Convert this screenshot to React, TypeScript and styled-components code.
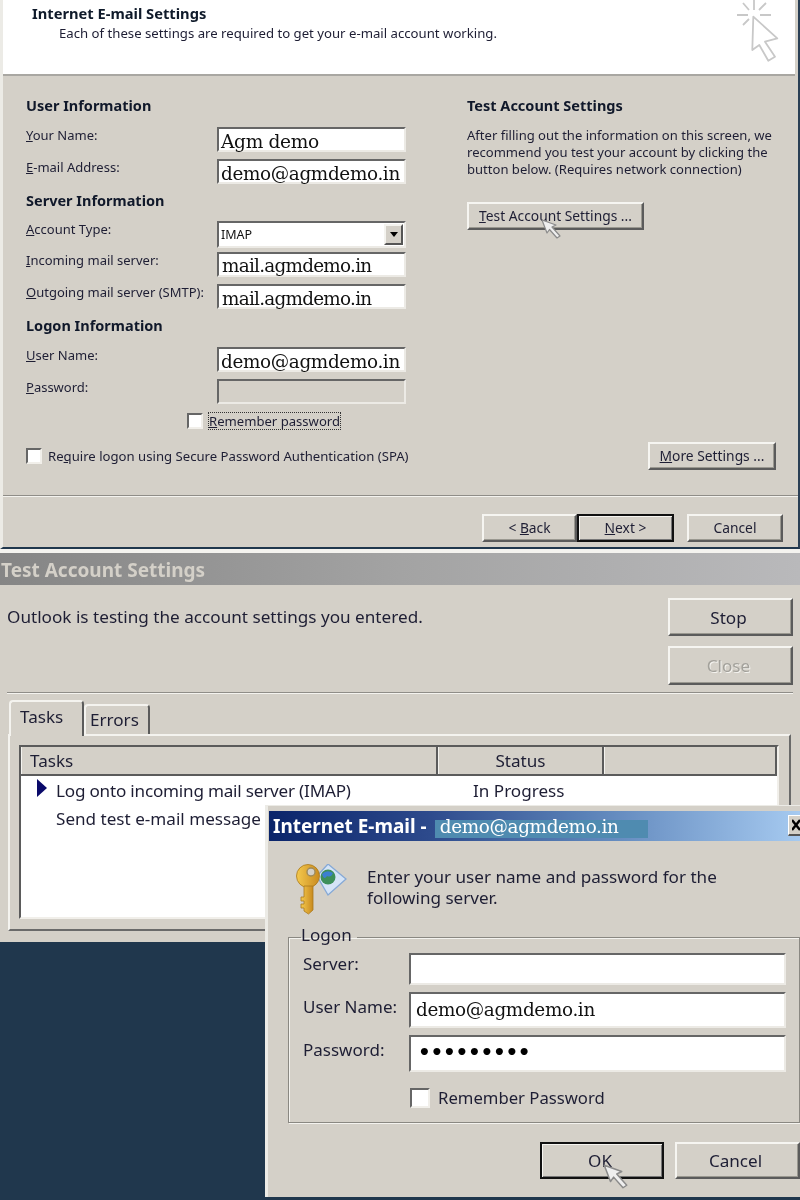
import React from "react";
import styled, { createGlobalStyle } from "styled-components";

const Global = createGlobalStyle`
  html, body { margin: 0; padding: 0; background: #20374d; }
`;

const ui = `"Noto Sans", "Liberation Sans", sans-serif`;
const serif = `"DejaVu Serif", "Liberation Serif", serif`;
const ink = "#1e1e34";
const face = "#d4d0c8";

const Page = styled.div`
  position: relative;
  width: 800px;
  height: 1200px;
  overflow: hidden;
  background: #20374d;
  font-family: ${ui};
  color: ${ink};
  filter: blur(0.35px);
`;

/* ---------- wizard window ---------- */
const Wizard = styled.section`
  box-sizing: border-box;
  height: 549px;
  background: ${face};
  border-left: 3px solid #ecebe6;
  border-right: 2px solid #2a3f55;
  border-bottom: 2px solid #20374d;
  display: flex;
  flex-direction: column;
`;
const Header = styled.header`
  position: relative;
  box-sizing: border-box;
  height: 76px;
  flex: none;
  margin-right: 3px;
  background: #fff;
  border-bottom: 2px solid #a9a7a2;
  padding: 4px 0 0 29px;
`;
const HeaderTitle = styled.div`
  font-size: 14.7px;
  line-height: 18px;
  font-weight: 700;
  color: #0f1a2a;
`;
const HeaderText = styled.div`
  font-size: 13.18px;
  line-height: 20px;
  margin: 1px 0 0 27px;
`;
const Spark = styled.svg`
  position: absolute;
  left: 731px;
  top: 0;
`;
const WizardBody = styled.div`
  flex: 1;
  padding: 20px 22px 0 23px;
`;
const Columns = styled.div`
  display: flex;
`;
const LeftColumn = styled.div`
  width: 380px;
  flex: none;
`;
const RightColumn = styled.div`
  margin-left: 60px;
  width: 310px;
  padding-left: 1px;
`;
const Heading = styled.div<{ $after?: number }>`
  font-size: 14.5px;
  line-height: 18px;
  font-weight: 700;
  color: #10182a;
  margin-bottom: ${(p) => (p.$after ?? 11) + 2}px;
`;
const Row = styled.div<{ $after?: number }>`
  display: flex;
  margin-bottom: ${(p) => p.$after ?? 7}px;
`;
const Label = styled.div`
  width: 191px;
  flex: none;
  font-size: 13px;
  line-height: 17px;
`;
const Field = styled.div<{
  $h?: number;
  $disabled?: boolean;
  $size?: number;
  $pad?: number;
  $track?: number;
  $nudgeTop?: number;
  $nudgeBottom?: number;
}>`
  box-sizing: border-box;
  flex: 1;
  height: ${(p) => p.$h ?? 25}px;
  display: flex;
  align-items: center;
  justify-content: space-between;
  padding: ${(p) => p.$nudgeTop ?? 3}px 0 ${(p) => p.$nudgeBottom ?? 0}px ${(p) => p.$pad ?? 2}px;
  background: ${(p) => (p.$disabled ? face : "#fff")};
  border-top: 2px solid #666;
  border-left: 2px solid #666;
  border-bottom: 2px solid #eceae5;
  border-right: 2px solid #eceae5;
  font-family: ${serif};
  font-size: ${(p) => p.$size ?? 18.4}px;
  letter-spacing: ${(p) => p.$track ?? -0.35}px;
  color: #111;
  white-space: nowrap;
`;
const SelectText = styled.span`
  font-family: ${ui};
  font-size: 12.5px;
  letter-spacing: 0;
`;
const DropButton = styled.span`
  box-sizing: border-box;
  width: 19px;
  height: 21px;
  margin-right: 1px;
  background: ${face};
  border: 2px solid;
  border-color: #f4f3ef #555 #555 #f4f3ef;
  display: flex;
  align-items: center;
  justify-content: center;
  &::after {
    content: "";
    border-left: 4px solid transparent;
    border-right: 4px solid transparent;
    border-top: 5px solid #000;
  }
`;
const CheckRow = styled.div<{ $indent?: number; $gap?: number }>`
  display: flex;
  align-items: center;
  gap: ${(p) => p.$gap ?? 6}px;
  padding-left: ${(p) => p.$indent ?? 0}px;
`;
const Check = styled.span<{ $size?: number }>`
  box-sizing: border-box;
  width: ${(p) => p.$size ?? 16}px;
  height: ${(p) => p.$size ?? 16}px;
  flex: none;
  background: #fff;
  border-top: 2px solid #666;
  border-left: 2px solid #666;
  border-bottom: 2px solid #f1efea;
  border-right: 2px solid #f1efea;
`;
const FocusLabel = styled.span`
  font-size: 13.1px;
  line-height: 16px;
  outline: 1px dotted #333;
  white-space: nowrap;
`;
const CheckLabel = styled.span<{ $size?: number }>`
  font-size: ${(p) => p.$size ?? 13.15}px;
  white-space: nowrap;
`;
const Paragraph = styled.p`
  margin: 0;
  font-size: 13.05px;
  line-height: 17px;
  white-space: nowrap;
`;
const Button = styled.button<{ $w: number; $h?: number; $size?: number; $default?: boolean; $disabled?: boolean }>`
  box-sizing: border-box;
  flex: none;
  width: ${(p) => p.$w}px;
  height: ${(p) => p.$h ?? 28}px;
  padding: 0 ${(p) => (p.$size ? 4 : 0)}px ${(p) => (p.$size ? 0 : 2)}px 0;
  background: ${face};
  border: 2px solid;
  border-color: ${(p) => (p.$default ? "#111" : "#f6f5f1 #5b5b5b #5b5b5b #f6f5f1")};
  box-shadow: ${(p) => (p.$default ? "inset 1px 1px 0 #f6f5f1, inset -1px -1px 0 #777" : "inset -1px -1px 0 #9a9890")};
  font-family: ${ui};
  font-size: ${(p) => p.$size ?? 13.8}px;
  color: ${(p) => (p.$disabled ? "#a3a19b" : ink)};
  text-shadow: ${(p) => (p.$disabled ? "1px 1px 0 #f4f3ef" : "none")};
  white-space: nowrap;
`;
const TopGap = styled.div`
  margin-top: 24px;
`;
const OptionsBar = styled.div`
  display: flex;
  align-items: center;
  justify-content: space-between;
  margin-top: 13px;
  height: 28px;
`;
const Rule = styled.div<{ $top?: number }>`
  height: 1px;
  margin-top: ${(p) => p.$top ?? 0}px;
  background: #8f8d88;
  border-bottom: 1px solid #f4f3ef;
`;
const NavBar = styled.div`
  flex: none;
  display: flex;
  justify-content: flex-end;
  padding: 17px 15px 5px 0;
`;
const NavGap = styled.span`
  width: 13px;
`;
const Pointer = styled.svg<{ $x: number; $y: number }>`
  position: absolute;
  left: ${(p) => p.$x}px;
  top: ${(p) => p.$y}px;
`;

/* ---------- test settings window ---------- */
const TestWindow = styled.section`
  height: 393px;
  box-sizing: border-box;
  border-top: 4px solid #f4f3ef;
  background: ${face};
`;
const GreyTitle = styled.div`
  height: 32px;
  padding-left: 1px;
  background: linear-gradient(90deg, #858585, #a3a3a3 50%, #b9b9bb);
  color: #d4d0c8;
  font-size: 19px;
  font-weight: 700;
  line-height: 34px;
`;
const TestBody = styled.div`
  padding: 13px 7px 0 7px;
`;
const TestTop = styled.div`
  display: flex;
  justify-content: space-between;
`;
const Message = styled.div`
  font-size: 17.15px;
  line-height: 24px;
  margin-top: 7px;
`;
const ButtonStack = styled.div`
  display: flex;
  flex-direction: column;
  gap: 10px;
`;
const TabStrip = styled.div`
  display: flex;
  align-items: flex-end;
  height: 34px;
  margin: 6px 0 0 2px;
  position: relative;
  z-index: 1;
`;
const Tab = styled.div<{ $active?: boolean }>`
  box-sizing: border-box;
  width: ${(p) => (p.$active ? 75 : 66)}px;
  height: ${(p) => (p.$active ? 36 : 30)}px;
  margin-bottom: ${(p) => (p.$active ? -2 : 0)}px;
  padding: ${(p) => (p.$active ? "3px 0 0 9px" : "2px 0 0 4px")};
  background: ${face};
  border-top: 2px solid #f4f3ef;
  border-left: 2px solid #f4f3ef;
  border-right: 2px solid #5b5b5b;
  border-radius: 4px 4px 0 0;
  font-size: 17.1px;
  line-height: 24px;
`;
const TabPanel = styled.div`
  box-sizing: border-box;
  height: 197px;
  margin: 0 2px 0 1px;
  padding: 9px 10px 10px 9px;
  background: ${face};
  border: 2px solid;
  border-color: #f4f3ef #6a6a6a #6a6a6a #f4f3ef;
`;
const ListBox = styled.div`
  box-sizing: border-box;
  height: 174px;
  background: #fff;
  border: 2px solid;
  border-color: #5b5b5b #f1efea #f1efea #5b5b5b;
`;
const ListHead = styled.div`
  display: flex;
  height: 27px;
  background: ${face};
  border-bottom: 2px solid #5b5b5b;
  font-size: 17.1px;
`;
const HeadCell = styled.div<{ $w?: number; $center?: boolean }>`
  box-sizing: border-box;
  ${(p) => (p.$w ? `width: ${p.$w}px; flex: none;` : "flex: 1;")}
  border-right: 2px solid #5b5b5b;
  border-left: 1px solid #f4f3ef;
  line-height: 28px;
  padding-left: ${(p) => (p.$center ? 0 : 8)}px;
  text-align: ${(p) => (p.$center ? "center" : "left")};
`;
const TaskRow = styled.div`
  display: flex;
  align-items: center;
  height: 28px;
  font-size: 17.1px;
`;
const Marker = styled.span`
  width: 35px;
  flex: none;
  padding-left: 16px;
  box-sizing: border-box;
  &::before {
    content: "";
    display: block;
    border-left: 10px solid #0a0a6a;
    border-top: 9px solid transparent;
    border-bottom: 9px solid transparent;
    width: 0;
    margin-top: -4px;
  }
`;
const MarkerSpace = styled.span`
  width: 35px;
  flex: none;
`;
const TaskName = styled.span<{ $squeeze?: boolean }>`
  width: 417px;
  flex: none;
  white-space: nowrap;
  letter-spacing: ${(p) => (p.$squeeze ? "-0.2px" : "0")};
`;

/* ---------- credentials dialog ---------- */
const Dialog = styled.section`
  position: absolute;
  left: 265px;
  top: 805px;
  box-sizing: border-box;
  width: 535px;
  height: 392px;
  padding: 6px 0 0 4px;
  background: ${face};
  border-top: 1px solid #ecebe6;
  border-left: 3px solid #ecebe6;
`;
const DialogTitle = styled.div`
  position: relative;
  display: flex;
  align-items: center;
  height: 30px;
  margin: -1px 0 0 -3px;
  padding-left: 4px;
  background: linear-gradient(90deg, #0a246a, #2d4a8c 30%, #5b82b8 60%, #a6caf0);
  color: #fff;
  font-size: 19px;
  font-weight: 700;
  white-space: nowrap;
`;
const MaskedName = styled.span`
  box-sizing: border-box;
  width: 213px;
  height: 18px;
  margin: 5px 0 0 8px;
  padding-left: 5px;
  background: #4f8bb0;
  font-family: ${serif};
  font-size: 18.4px;
  line-height: 14px;
  font-weight: 400;
  letter-spacing: -0.35px;
`;
const CloseBox = styled.span`
  position: absolute;
  right: 0;
  top: 4px;
  box-sizing: border-box;
  width: 12px;
  height: 21px;
  background: ${face};
  border-top: 1px solid #fff;
  border-left: 1px solid #fff;
  border-bottom: 2px solid #555;
  display: flex;
  align-items: center;
  justify-content: flex-end;
`;
const Intro = styled.div`
  display: flex;
  gap: 20px;
  height: 52px;
  margin: 23px 0 0 23px;
`;
const IntroText = styled.div`
  font-size: 17.1px;
  line-height: 21px;
  padding-top: 2px;
`;
const Group = styled.fieldset`
  box-sizing: border-box;
  height: 198px;
  margin: 9px 0 0 16px;
  padding: 4px 13px 0 14px;
  min-width: 0;
  border: 1px solid #8a8882;
  box-shadow: inset 1px 1px 0 #f4f3ef, 1px 1px 0 #f4f3ef;
`;
const GroupLegend = styled.legend`
  padding: 0 5px 4px 0;
  margin-left: -2px;
  font-size: 17.1px;
  line-height: 20px;
`;
const DialogRow = styled.div<{ $after?: number }>`
  display: flex;
  margin-bottom: ${(p) => p.$after ?? 7}px;
`;
const DialogLabel = styled.div<{ $top: number }>`
  width: 106px;
  flex: none;
  padding-top: ${(p) => p.$top}px;
  font-size: 17px;
  line-height: 20px;
`;
const Dots = styled.span`
  font-family: "DejaVu Sans", sans-serif;
  font-size: 20px;
  font-weight: 700;
  letter-spacing: -0.3px;
  color: #000;
`;
const DialogButtons = styled.div`
  display: flex;
  justify-content: flex-end;
  gap: 11px;
  margin-top: 19px;
`;

const Arrow = ({ x, y, s }: { x: number; y: number; s: number }) => (
  <Pointer $x={x} $y={y} width={s} height={s} viewBox="0 0 20 20">
    <path
      d="M1 1 L6 14 L8.5 10.5 L16 19 L19 17 L11 8 L15 6 Z"
      fill="#efefef"
      stroke="#8a8a8a"
      strokeWidth="1.2"
      strokeLinejoin="round"
    />
  </Pointer>
);

const KeyIcon = () => (
  <svg width="52" height="52" viewBox="0 0 52 52">
    <defs>
      <linearGradient id="gold" x1="0" y1="0" x2="1" y2="0">
        <stop offset="0" stopColor="#f4c94e" />
        <stop offset="1" stopColor="#c98a1e" />
      </linearGradient>
    </defs>
    <path d="M22 12 L33 0 L51 15 L33 31 Z" fill="#d5e4f7" stroke="#86a9d6" strokeWidth="1.3" />
    <circle cx="33" cy="13" r="7.5" fill="#3d8f5a" />
    <path d="M27 10 Q32 5 38 9 Q36 14 32 12 Q29 17 27 10 Z" fill="#3b7fd0" />
    <circle cx="13" cy="12" r="11.5" fill="url(#gold)" stroke="#a9781c" strokeWidth="0.8" />
    <circle cx="16" cy="8" r="4" fill="#d4d0c8" stroke="#9d8a5c" strokeWidth="1.4" />
    <path d="M9 22 H18 V46 L13.5 50 L9 47 V44 H6 V40 H9 V37 H6 V33 H9 Z" fill="url(#gold)" stroke="#a9781c" strokeWidth="0.8" />
  </svg>
);

export default function App() {
  return (
    <Page>
      <Global />
      <Wizard>
        <Header>
          <HeaderTitle>Internet E-mail Settings</HeaderTitle>
          <HeaderText>Each of these settings are required to get your e-mail account working.</HeaderText>
          <Spark width="48" height="64" viewBox="0 0 48 64" fill="none" stroke="#c8c8c8" strokeWidth="1.8">
            <path d="M20 0 V10 M3 15 H14 M26 15 H37 M9 3 L15 10 M32 3 L25 10 M9 25 L15 19" />
            <path d="M19.3 16.7 L43.3 38.3 L31 41.7 L41 56.7 L34.3 60.7 L25.3 45 L18.3 50 Z" strokeLinejoin="round" fill="#fff" />
          </Spark>
        </Header>
        <WizardBody>
          <Columns>
            <LeftColumn>
              <Heading>User Information</Heading>
              <Row>
                <Label><u>Y</u>our Name:</Label>
                <Field $size={18.6}>Agm demo</Field>
              </Row>
              <Row>
                <Label><u>E</u>-mail Address:</Label>
                <Field>demo@agmdemo.in</Field>
              </Row>
              <Heading $after={10}>Server Information</Heading>
              <Row $after={4}>
                <Label><u>A</u>ccount Type:</Label>
                <Field $h={27} $nudgeTop={0}>
                  <SelectText>IMAP</SelectText>
                  <DropButton />
                </Field>
              </Row>
              <Row>
                <Label><u>I</u>ncoming mail server:</Label>
                <Field $pad={3} $track={-0.75} $nudgeTop={1}>mail.agmdemo.in</Field>
              </Row>
              <Row>
                <Label><u>O</u>utgoing mail server (SMTP):</Label>
                <Field $pad={3} $track={-0.75}>mail.agmdemo.in</Field>
              </Row>
              <Heading>Logon Information</Heading>
              <Row>
                <Label><u>U</u>ser Name:</Label>
                <Field>demo@agmdemo.in</Field>
              </Row>
              <Row $after={9}>
                <Label><u>P</u>assword:</Label>
                <Field $disabled />
              </Row>
              <CheckRow $indent={161}>
                <Check />
                <FocusLabel><u>R</u>emember password</FocusLabel>
              </CheckRow>
            </LeftColumn>
            <RightColumn>
              <Heading>Test Account Settings</Heading>
              <Paragraph>
                After filling out the information on this screen, we
                <br />
                recommend you test your account by clicking the
                <br />
                button below. (Requires network connection)
              </Paragraph>
              <TopGap>
                <Button $w={177}><u>T</u>est Account Settings ...</Button>
              </TopGap>
            </RightColumn>
          </Columns>
          <OptionsBar>
            <CheckRow>
              <Check />
              <CheckLabel>Re<u>q</u>uire logon using Secure Password Authentication (SPA)</CheckLabel>
            </CheckRow>
            <Button $w={128}><u>M</u>ore Settings ...</Button>
          </OptionsBar>
        </WizardBody>
        <Rule />
        <NavBar>
          <Button $w={95}>&lt; <u>B</u>ack</Button>
          <Button $w={97} $default><u>N</u>ext &gt;</Button>
          <NavGap />
          <Button $w={96}>Cancel</Button>
        </NavBar>
      </Wizard>
      <TestWindow>
        <GreyTitle>Test Account Settings</GreyTitle>
        <TestBody>
          <TestTop>
            <Message>Outlook is testing the account settings you entered.</Message>
            <ButtonStack>
              <Button $w={125} $h={38} $size={17.1}>Stop</Button>
              <Button $w={125} $h={39} $size={17.1} $disabled>Close</Button>
            </ButtonStack>
          </TestTop>
          <Rule $top={7} />
          <TabStrip>
            <Tab $active>Tasks</Tab>
            <Tab>Errors</Tab>
          </TabStrip>
          <TabPanel>
            <ListBox>
              <ListHead>
                <HeadCell $w={417}>Tasks</HeadCell>
                <HeadCell $w={166} $center>Status</HeadCell>
                <HeadCell />
              </ListHead>
              <TaskRow>
                <Marker />
                <TaskName $squeeze>Log onto incoming mail server (IMAP)</TaskName>
                <span>In Progress</span>
              </TaskRow>
              <TaskRow>
                <MarkerSpace />
                <TaskName>Send test e-mail message</TaskName>
              </TaskRow>
            </ListBox>
          </TabPanel>
        </TestBody>
      </TestWindow>
      <Dialog>
        <DialogTitle>
          Internet E-mail -
          <MaskedName>demo@agmdemo.in</MaskedName>
          <CloseBox>
            <svg width="8" height="12" viewBox="0 0 8 12">
              <path d="M0 1 L8 11 M0 11 L8 1" stroke="#000" strokeWidth="2.4" fill="none" />
            </svg>
          </CloseBox>
        </DialogTitle>
        <Intro>
          <KeyIcon />
          <IntroText>
            Enter your user name and password for the
            <br />
            following server.
          </IntroText>
        </Intro>
        <Group>
          <GroupLegend>Logon</GroupLegend>
          <DialogRow>
            <DialogLabel $top={1}>Server:</DialogLabel>
            <Field $h={32} $nudgeTop={0} />
          </DialogRow>
          <DialogRow>
            <DialogLabel $top={5}>User Name:</DialogLabel>
            <Field $h={36} $pad={5} $nudgeTop={0} $nudgeBottom={2}>demo@agmdemo.in</Field>
          </DialogRow>
          <DialogRow $after={14}>
            <DialogLabel $top={5}>Password:</DialogLabel>
            <Field $h={37} $pad={7} $nudgeTop={0} $nudgeBottom={4}><Dots>•••••••••</Dots></Field>
          </DialogRow>
          <CheckRow $indent={107} $gap={8}>
            <Check $size={20} />
            <CheckLabel $size={16.7}>Remember Password</CheckLabel>
          </CheckRow>
        </Group>
        <DialogButtons>
          <Button $w={124} $h={37} $size={17.1} $default>OK</Button>
          <Button $w={125} $h={37} $size={17.1}>Cancel</Button>
        </DialogButtons>
      </Dialog>
      <Arrow x={541} y={219} s={20} />
      <Arrow x={603} y={1164} s={25} />
    </Page>
  );
}
